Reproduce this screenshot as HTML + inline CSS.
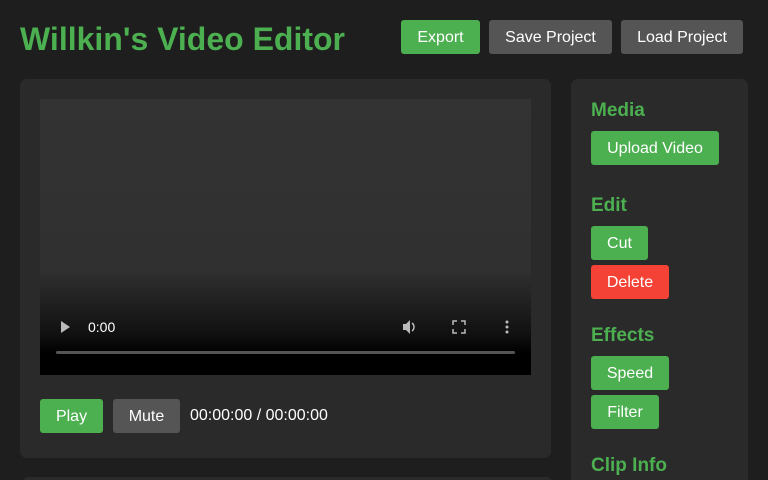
<!DOCTYPE html>
<html style="overflow:hidden;height:480px"><head><style>
body{margin:0;width:768px;height:480px;background:#1e1e1e;font-family:"Liberation Sans",sans-serif;overflow:hidden;position:relative;color:#fff}
.a{position:absolute}
h1{position:absolute;left:20px;top:20px;margin:0;font-size:32px;color:#4caf50;font-weight:bold;line-height:38px}
.b{position:absolute;height:34px;line-height:35px;border-radius:3px;color:#fff;font-size:16px;text-align:center}
.g{background:#4caf50}.d{background:#555}.r{background:#f44336}
.panel{position:absolute;background:#2a2a2a;border-radius:7px}
h3{position:absolute;margin:0;color:#4caf50;font-size:19px;font-weight:bold;left:591px}
</style></head><body>
<h1>Willkin's Video Editor</h1>
<div class="b g" style="left:401px;top:20px;width:79px">Export</div>
<div class="b d" style="left:489px;top:20px;width:123px">Save Project</div>
<div class="b d" style="left:621px;top:20px;width:122px">Load Project</div>
<div class="panel" style="left:20px;top:79px;width:531px;height:379px"></div>
<div class="panel" style="left:24px;top:477px;width:527px;height:3px;border-radius:7px 7px 0 0"></div>
<div class="a" style="left:40px;top:99px;width:491px;height:276px;background:linear-gradient(#333 0,#303030 62%,#111 85%,#000 92%,#000 100%)"></div>
<svg class="a" style="left:40px;top:99px" width="491" height="276">
<polygon points="21,222 21,234 30,228" fill="#bbb"/>
<text x="48" y="233" fill="#fff" font-size="14" font-family="Liberation Sans">0:00</text>
<path d="M363,225h3l4,-4v14l-4,-4h-3z" fill="#bbb"/><path d="M372,224a5,5 0 0 1 0,8" stroke="#bbb" stroke-width="1.5" fill="none"/>
<path d="M413,226v-4h4M421,222h4v4M425,230v4h-4M417,234h-4v-4" stroke="#bbb" stroke-width="1.5" fill="none"/>
<circle cx="467" cy="223" r="1.5" fill="#bbb"/><circle cx="467" cy="228" r="1.5" fill="#bbb"/><circle cx="467" cy="233" r="1.5" fill="#bbb"/>
<rect x="16" y="252" width="459" height="3" rx="1.5" fill="#555"/>
</svg>
<div class="b g" style="left:40px;top:399px;width:63px">Play</div>
<div class="b d" style="left:113px;top:399px;width:67px">Mute</div>
<div class="a" style="left:190px;top:407px;font-size:16px">00:00:00 / 00:00:00</div>
<div class="panel" style="left:571px;top:79px;width:177px;height:401px;border-radius:7px 7px 0 0"></div>
<h3 style="top:100px">Media</h3>
<div class="b g" style="left:591px;top:131px;width:128px">Upload Video</div>
<h3 style="top:195px">Edit</h3>
<div class="b g" style="left:591px;top:226px;width:57px">Cut</div>
<div class="b r" style="left:591px;top:265px;width:78px">Delete</div>
<h3 style="top:325px">Effects</h3>
<div class="b g" style="left:591px;top:356px;width:78px">Speed</div>
<div class="b g" style="left:591px;top:395px;width:68px">Filter</div>
<h3 style="top:455px">Clip Info</h3>
</body></html>
